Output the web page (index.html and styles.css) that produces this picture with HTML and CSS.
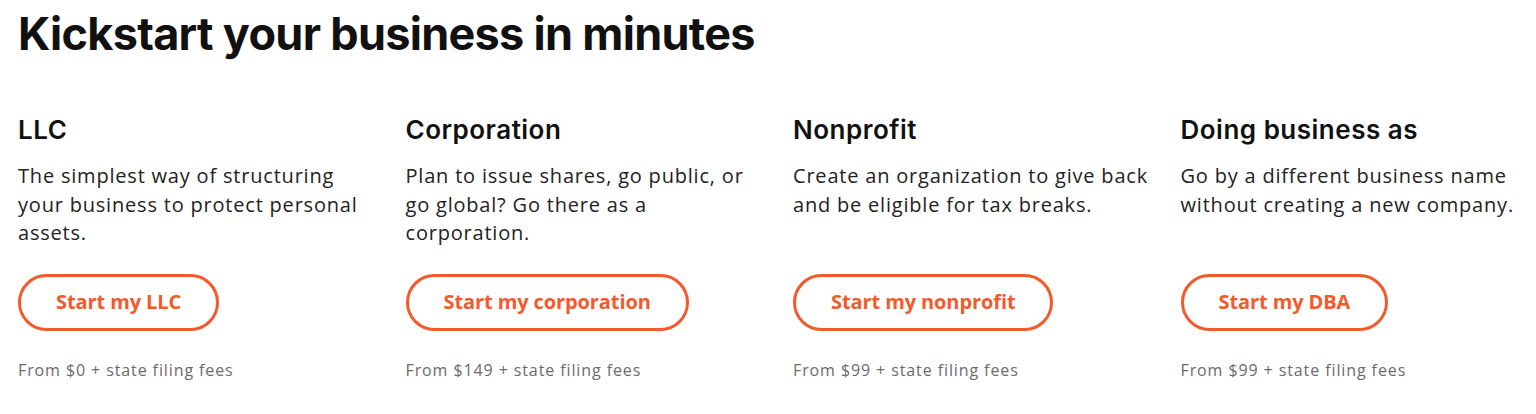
FILE: index.html
```html
<!DOCTYPE html>
<html lang="en">
<head>
    <meta charset="UTF-8">
    <meta name="viewport" content="width=device-width, initial-scale=1.0">
    <title>Kickstart your business</title>
    <link rel="stylesheet" href="styles.css">
</head>
<body>
  <main class="page">
    <h1 class="title">Kickstart your business in minutes</h1>
    <div class="products">
      <div class="product">
        <h2>LLC</h2>
        <p class="desc">The simplest way of structuring your business to protect personal assets.</p>
        <a class="start-btn" href="#">Start my LLC</a>
        <p class="price">From $0 + state filing fees</p>
      </div>
      <div class="product">
        <h2>Corporation</h2>
        <p class="desc">Plan to issue shares, go public, or go global? Go there as a corporation.</p>
        <a class="start-btn" href="#">Start my corporation</a>
        <p class="price">From $149 + state filing fees</p>
      </div>
      <div class="product">
        <h2>Nonprofit</h2>
        <p class="desc">Create an organization to give back and be eligible for tax breaks.</p>
        <a class="start-btn" href="#">Start my nonprofit</a>
        <p class="price">From $99 + state filing fees</p>
      </div>
      <div class="product">
        <h2>Doing business as</h2>
        <p class="desc">Go by a different business name without creating a new company.</p>
        <a class="start-btn" href="#">Start my DBA</a>
        <p class="price">From $99 + state filing fees</p>
      </div>
    </div>
  </main>
</body>
</html>
```

FILE: styles.css
```css
*{
    margin: 0;
    padding: 0;
    box-sizing: border-box;
}
body{
    background-color: #fff;
    font-family: "Open Sans", "Noto Sans", sans-serif;
    color: #1a1a1a;
}
.page{
    padding: 6px 18px 0;
}
.title{
    font-family: Inter, "Liberation Sans", sans-serif;
    font-size: 45px;
    font-weight: 700;
    letter-spacing: -0.7px;
    line-height: 56px;
    color: #111;
}
.products{
    margin-top: 52px;
    display: grid;
    grid-template-columns: 360px 360px 360px 1fr;
    column-gap: 27.5px;
}
.product{
    display: flex;
    flex-direction: column;
    align-items: flex-start;
}
.product h2{
    font-family: Inter, "Liberation Sans", sans-serif;
    font-size: 26px;
    font-weight: 600;
    letter-spacing: 0.5px;
    line-height: 32px;
    color: #111;
}
.desc{
    margin-top: 16px;
    font-size: 20px;
    letter-spacing: 0.8px;
    line-height: 28.5px;
    height: 85.5px;
    color: #222;
}
.start-btn{
    margin-top: 26px;
    display: inline-block;
    height: 57px;
    line-height: 50px;
    padding: 0 35px;
    border: 3.5px solid #f25a2b;
    border-radius: 30px;
    color: #f25a2b;
    font-size: 20px;
    font-weight: 700;
    letter-spacing: -0.1px;
    text-decoration: none;
}
.price{
    margin-top: 28px;
    font-size: 16px;
    letter-spacing: 0.9px;
    color: #6b6b6b;
}
```
